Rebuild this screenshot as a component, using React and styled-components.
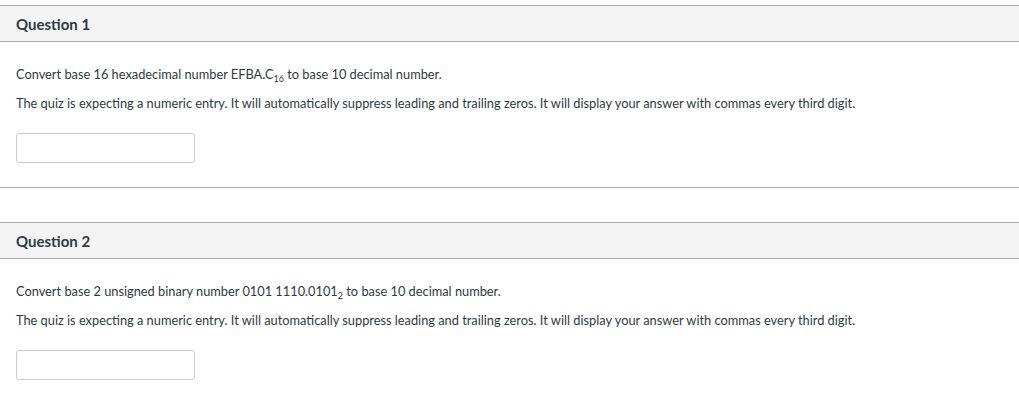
import React from 'react';
import styled, { createGlobalStyle } from 'styled-components';

const GlobalStyle = createGlobalStyle`
  body {
    margin: 0;
    background: #fff;
    font-family: Lato, "Liberation Sans", sans-serif;
    color: #2d3b45;
  }
`;

const Page = styled.div`
  padding-top: 5px;
  display: flex;
  flex-direction: column;
  gap: 34px;
`;

const Question = styled.div`
  border-top: 1px solid #a9a9a9;
  border-bottom: 1px solid #a9a9a9;
`;

const Header = styled.div`
  height: 35px;
  background: #f4f4f4;
  border-bottom: 1px solid #a9a9a9;
  padding: 0 16px;
  display: flex;
  align-items: center;
  font-size: 15px;
  font-weight: 700;
  color: #2d3b45;
`;

const Body = styled.div`
  padding: 24px 16px 24px;
`;

const Text = styled.p`
  margin: 0 0 12px;
  font-size: 12.8px;
  line-height: 17px;
`;

const Sub = styled.sub`
  font-size: 9px;
  line-height: 0;
  vertical-align: -3px;
`;

const Answer = styled.input`
  display: block;
  box-sizing: border-box;
  margin-top: 21px;
  width: 179px;
  height: 30px;
  border: 1px solid #c7cdd1;
  border-radius: 3px;
  background: #fff;
`;

const questions = [
  {
    title: 'Question 1',
    prompt: (
      <>Convert base 16 hexadecimal number EFBA.C<Sub>16</Sub> to base 10 decimal number.</>
    ),
  },
  {
    title: 'Question 2',
    prompt: (
      <>Convert base 2 unsigned binary number 0101 1110.0101<Sub>2</Sub> to base 10 decimal number.</>
    ),
  },
];

const note =
  'The quiz is expecting a numeric entry. It will automatically suppress leading and trailing zeros. It will display your answer with commas every third digit.';

export default function App() {
  return (
    <>
      <GlobalStyle />
      <Page>
        {questions.map((q) => (
          <Question key={q.title}>
            <Header>{q.title}</Header>
            <Body>
              <Text>{q.prompt}</Text>
              <Text>{note}</Text>
              <Answer type="text" />
            </Body>
          </Question>
        ))}
      </Page>
    </>
  );
}
